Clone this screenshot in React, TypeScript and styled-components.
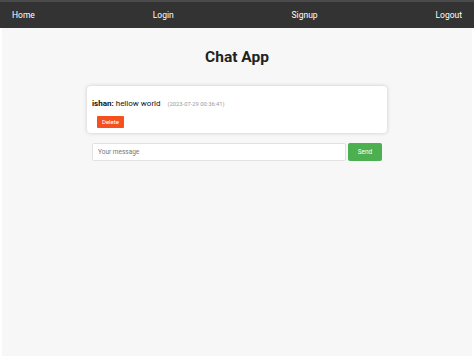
import styled, { createGlobalStyle } from 'styled-components'

const GlobalStyle = createGlobalStyle`
    html, body {
        margin: 0;
        padding: 0;
        background: #ffffff;
        font-family: Roboto, "Liberation Sans", Arial, sans-serif;
    }
`

// Navbar
const Nav = styled.nav`
    display: flex;
    align-items: center;
    justify-content: space-between;
    height: 26px;
    padding: 0 12px 0 12px;
    background-color: #333333;
    border-top: 2px solid #4a4a4a;

    & > a {
        color: #ffffff;
        font-size: 8.5px;
        text-decoration: none;
    }
`

// Page
const Page = styled.main`
    display: flex;
    flex-direction: column;
    align-items: center;
    height: 328px;
    margin: 0 2px;
    background-color: #f7f7f7;
`

const Title = styled.h1`
    margin: 20px 0 20px 0;
    font-size: 15.5px;
    font-weight: 700;
    color: #222222;
`

// Messages
const ChatBox = styled.div`
    box-sizing: border-box;
    width: 300px;
    padding: 13px 5px 5px 5px;
    background-color: #ffffff;
    border-radius: 4px;
    box-shadow: 0 0 4px rgba(0, 0, 0, 0.18);
`

const Message = styled.div`
    display: flex;
    flex-direction: column;
    align-items: flex-start;
`

const MessageLine = styled.p`
    margin: 0 0 7.5px 0;
    font-size: 8px;
    color: #111111;

    & > b {
        font-weight: 700;
    }
`

const Timestamp = styled.span`
    margin-left: 7px;
    font-size: 5.8px;
    color: #999999;
`

const DeleteButton = styled.button`
    height: 12px;
    margin-left: 5px;
    padding: 0 5px;
    border: none;
    border-radius: 1px;
    background-color: #f4511e;
    color: #ffffff;
    font-family: inherit;
    font-size: 6px;
`

// Form
const Form = styled.form`
    display: flex;
    gap: 2px;
    width: 290px;
    margin-top: 10px;
`

const Input = styled.input`
    flex: 1;
    box-sizing: border-box;
    height: 18px;
    padding: 0 5px;
    border: 1px solid #e2e2e2;
    border-radius: 2px;
    background-color: #ffffff;
    font-family: inherit;
    font-size: 6.5px;

    &::placeholder {
        color: #777777;
    }
`

const SendButton = styled.button`
    width: 34px;
    height: 18px;
    border: none;
    border-radius: 2px;
    background-color: #4caf50;
    color: #ffffff;
    font-family: inherit;
    font-size: 6.5px;
`

export default function App() {
    return (
        <>
            <GlobalStyle />
            <Nav>
                <a href="#">Home</a>
                <a href="#">Login</a>
                <a href="#">Signup</a>
                <a href="#">Logout</a>
            </Nav>
            <Page>
                <Title>Chat App</Title>
                <ChatBox>
                    <Message>
                        <MessageLine>
                            <b>ishan:</b> hellow world
                            <Timestamp>(2023-07-29 00:36:41)</Timestamp>
                        </MessageLine>
                        <DeleteButton>Delete</DeleteButton>
                    </Message>
                </ChatBox>
                <Form onSubmit={(e) => e.preventDefault()}>
                    <Input placeholder="Your message" />
                    <SendButton type="submit">Send</SendButton>
                </Form>
            </Page>
        </>
    )
}
